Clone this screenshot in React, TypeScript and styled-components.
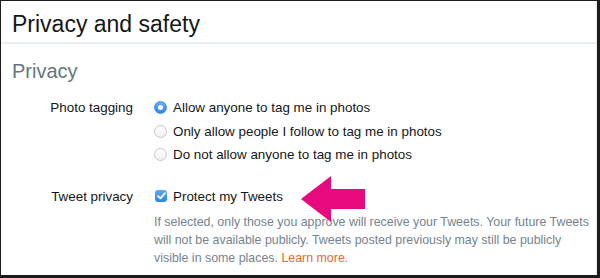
import styled, { createGlobalStyle } from "styled-components";

const GlobalStyle = createGlobalStyle`
  html, body {
    margin: 0;
    padding: 0;
    background: #1c1c1c;
  }
  body {
    font-family: "Liberation Sans", Arial, sans-serif;
    color: #14171a;
  }
`;

const photoOptions = [
  { label: "Allow anyone to tag me in photos", checked: true },
  { label: "Only allow people I follow to tag me in photos", checked: false },
  { label: "Do not allow anyone to tag me in photos", checked: false },
];

export default function App() {
  return (
    <>
      <GlobalStyle />
      <Frame>
        <Panel>
          <Header>
            <Title>Privacy and safety</Title>
          </Header>
          <Section>
            <SubTitle>Privacy</SubTitle>
            <Grid>
              <Label>Photo tagging</Label>
              <Options>
                {photoOptions.map((o) => (
                  <Option key={o.label}>
                    <Radio checked={o.checked} />
                    {o.label}
                  </Option>
                ))}
              </Options>

              <Label $top={5}>Tweet privacy</Label>
              <Options>
                <CheckRow>
                  <Option>
                    <Checkbox>
                      <svg width="9" height="8" viewBox="0 0 9 8">
                        <path
                          d="M1 4.2 L3.4 6.4 L8 1.2"
                          fill="none"
                          stroke="#fff"
                          strokeWidth="1.8"
                          strokeLinecap="round"
                          strokeLinejoin="round"
                        />
                      </svg>
                    </Checkbox>
                    Protect my Tweets
                  </Option>
                  <Arrow viewBox="0 0 64 46">
                    <polygon points="0,23 30,0 30,13 64,13 64,33 30,33 30,46" fill="#e8097f" />
                  </Arrow>
                </CheckRow>
                <Help>
                  If selected, only those you approve will receive your Tweets. Your future Tweets
                  will not be available publicly. Tweets posted previously may still be publicly
                  visible in some places. <Link>Learn more.</Link>
                </Help>
              </Options>
            </Grid>
          </Section>
        </Panel>
      </Frame>
    </>
  );
}

const Frame = styled.div`
  width: 600px;
  height: 278px;
  box-sizing: border-box;
  border-style: solid;
  border-color: #1c1c1c;
  border-width: 1px 3px 3px 1px;
  overflow: hidden;
`;

const Panel = styled.div`
  height: 100%;
  background: #fff;
  border-right: 1px solid #e6ecf0;
  box-sizing: border-box;
`;

const Header = styled.div`
  height: 43px;
  box-sizing: border-box;
  padding: 0 11px 5px;
  border-bottom: 2px solid #e9eef2;
  display: flex;
  align-items: flex-end;
`;

const Title = styled.h1`
  margin: 0;
  font-size: 23px;
  line-height: 26px;
  font-weight: normal;
  color: #14171a;
`;

const Section = styled.div`
  padding: 14px 11px 0;
`;

const SubTitle = styled.h2`
  margin: 0 0 12px;
  font-size: 20px;
  font-weight: normal;
  color: #66757f;
  line-height: 26px;
`;

const Grid = styled.div`
  display: grid;
  grid-template-columns: 121px 1fr;
  column-gap: 21px;
  row-gap: 13px;
`;

const Label = styled.div<{ $top?: number }>`
  text-align: right;
  font-size: 13.4px;
  line-height: 23.5px;
  color: #14171a;
  padding-top: ${(p) => p.$top ?? 0}px;
`;

const Options = styled.div`
  display: flex;
  flex-direction: column;
`;

const Option = styled.label`
  display: flex;
  align-items: center;
  gap: 6px;
  font-size: 13.4px;
  line-height: 23.5px;
  color: #14171a;
`;

const Radio = styled.span<{ checked: boolean }>`
  width: 13px;
  height: 13px;
  border-radius: 50%;
  box-sizing: border-box;
  flex: none;
  display: flex;
  align-items: center;
  justify-content: center;
  border: 1px solid ${(p) => (p.checked ? "#3a8ee6" : "#c8c8c8")};
  background: ${(p) =>
    p.checked ? "linear-gradient(#69b1fa, #2a86ec)" : "linear-gradient(#fff, #f1f1f1)"};
  &::after {
    content: "";
    display: ${(p) => (p.checked ? "block" : "none")};
    width: 5px;
    height: 5px;
    border-radius: 50%;
    background: #fff;
  }
`;

const CheckRow = styled.div`
  position: relative;
  padding: 5px 0 5px;
`;

const Checkbox = styled.span`
  width: 12px;
  height: 12px;
  border-radius: 3px;
  flex: none;
  display: flex;
  align-items: center;
  justify-content: center;
  background: linear-gradient(#5aa8f7, #2f86ea);
  margin-left: 1px;
`;

const Arrow = styled.svg`
  position: absolute;
  left: 147px;
  top: -4px;
  width: 64px;
  height: 46px;
`;

const Help = styled.p`
  margin: 0;
  font-size: 12.4px;
  line-height: 18px;
  color: #76838e;
  width: 440px;
`;

const Link = styled.span`
  color: #e8692e;
`;
